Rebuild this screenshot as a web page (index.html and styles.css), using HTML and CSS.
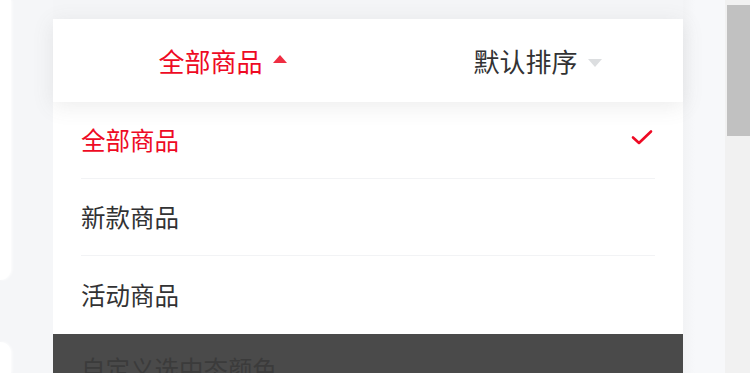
FILE: index.html
```html
<!DOCTYPE html>
<html lang="zh-CN">
<head>
<meta charset="utf-8">
<title>DropdownMenu</title>
<link rel="stylesheet" href="styles.css">
</head>
<body>
<div class="page">
  <div class="gutter-left">
    <div class="edge edge-top"></div>
    <div class="edge-gap"></div>
    <div class="edge edge-bottom"></div>
  </div>
  <main class="main">
    <div class="bar">
      <div class="bar-item">
        <span class="title title-active">全部商品<span class="arrow arrow-up"></span></span>
      </div>
      <div class="bar-item">
        <span class="title">默认排序<span class="arrow arrow-down"></span></span>
      </div>
    </div>
    <div class="options">
      <div class="option option-active">
        <span class="option-text">全部商品</span>
        <svg class="check" width="22" height="18" viewBox="0 0 22 18"><polyline points="2,8.5 8,14 20,2.5" fill="none" stroke="#ee0a24" stroke-width="2.6" stroke-linecap="round" stroke-linejoin="round"/></svg>
      </div>
      <div class="option"><span class="option-text">新款商品</span></div>
      <div class="option option-last"><span class="option-text">活动商品</span></div>
    </div>
    <div class="overlay">
      <div class="overlay-text">自定义选中态颜色</div>
    </div>
  </main>
  <div class="gutter-right"></div>
  <div class="scrollbar"><div class="thumb"></div></div>
</div>
</body>
</html>
```
FILE: styles.css
```css
html, body {
  margin: 0;
  padding: 0;
  height: 373px;
  overflow: hidden;
  background: #fff;
  font-family: "Noto Sans CJK SC", "Noto Sans", sans-serif;
}
.page {
  display: flex;
  height: 373px;
}
.gutter-left {
  width: 53px;
  flex: none;
  display: flex;
  flex-direction: column;
  background: linear-gradient(to right, #f5f6f8 0, #f5f6f8 53px);
}
.edge {
  width: 11px;
  background: #fff;
  flex: none;
  box-shadow: 1px 0 3px rgba(255, 255, 255, 0.9);
}
.edge-top {
  height: 280px;
  border-bottom-right-radius: 22px;
}
.edge-gap {
  height: 62px;
  flex: none;
}
.edge-bottom {
  flex: 1;
  border-top-right-radius: 22px;
}
.main {
  width: 630px;
  flex: none;
  display: flex;
  flex-direction: column;
  background: #f4f5f7;
  padding-top: 19px;
  box-sizing: border-box;
}
.bar {
  height: 83px;
  flex: none;
  display: flex;
  background: #fff;
  position: relative;
  z-index: 1;
  box-shadow: 0 4px 20px rgba(100, 101, 102, 0.12);
}
.bar-item {
  flex: 1;
  display: flex;
  align-items: center;
  justify-content: center;
}
.title {
  position: relative;
  font-size: 26px;
  line-height: 32px;
  color: #323233;
}
.title-active {
  color: #ee0a24;
}
.arrow {
  position: absolute;
  top: 50%;
  width: 0;
  height: 0;
  border-left: 7.5px solid transparent;
  border-right: 7.5px solid transparent;
}
.arrow-up {
  left: calc(100% + 10px);
  margin-top: -6px;
  border-bottom: 8px solid #ef2d42;
}
.arrow-down {
  left: calc(100% + 10px);
  margin-top: -2px;
  border-top: 8px solid #dcdee0;
}
.options {
  background: #fff;
  flex: none;
}
.option {
  height: 77px;
  margin: 0 28px;
  display: flex;
  align-items: center;
  justify-content: space-between;
  border-bottom: 1px solid #f2f3f5;
  box-sizing: border-box;
}
.option-last {
  border-bottom: none;
  height: 78px;
}
.option-text {
  font-size: 24.5px;
  line-height: 30px;
  color: #323233;
}
.option-active .option-text {
  color: #ee0a24;
}
.check {
  margin-right: 2px;
  margin-top: -4px;
}
.overlay {
  flex: 1;
  background: #4a4a4a;
  padding: 20px 28px 0;
}
.overlay-text {
  font-size: 24.5px;
  line-height: 30px;
  color: #3b3b3b;
}
.gutter-right {
  width: 42px;
  flex: none;
  background: linear-gradient(to right, #f2f3f5 0, #f7f8fa 12px, #f7f8fa 42px);
}
.scrollbar {
  width: 25px;
  flex: none;
  background: #f1f1f1;
  padding: 5px 0 0 2px;
  box-sizing: border-box;
}
.thumb {
  height: 131px;
  background: #c1c1c1;
}
```
